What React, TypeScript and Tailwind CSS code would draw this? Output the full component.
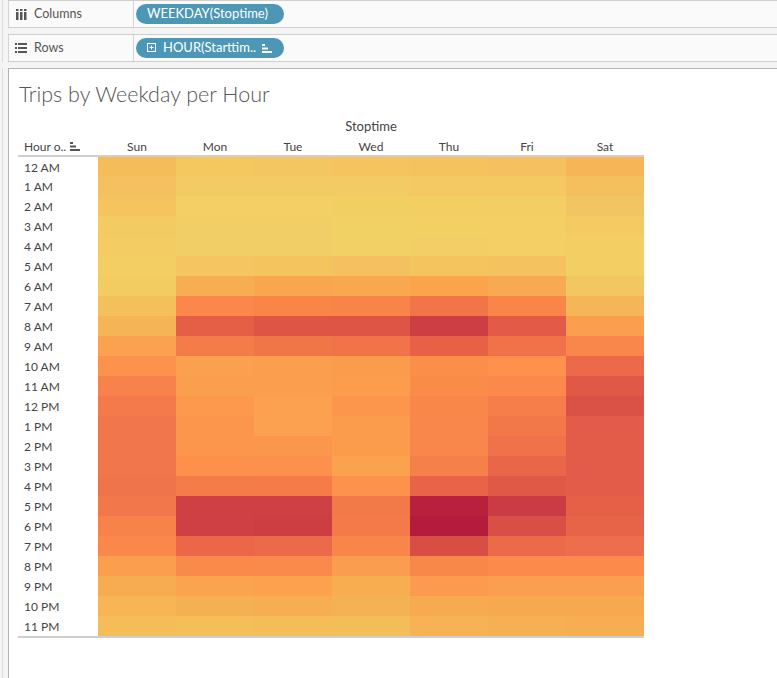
const hours = [
  "12 AM", "1 AM", "2 AM", "3 AM", "4 AM", "5 AM", "6 AM", "7 AM", "8 AM", "9 AM", "10 AM", "11 AM",
  "12 PM", "1 PM", "2 PM", "3 PM", "4 PM", "5 PM", "6 PM", "7 PM", "8 PM", "9 PM", "10 PM", "11 PM",
];

const days = ["Sun", "Mon", "Tue", "Wed", "Thu", "Fri", "Sat"];

// one row per hour, Sun to Sat
const heat = [
  ["#f5bd59", "#f5c85f", "#f4c661", "#f6c45f", "#f5c35d", "#f4c060", "#f6b658"],
  ["#f4c060", "#f3cb64", "#f3cb64", "#f3cb64", "#f4c964", "#f5c962", "#f4c05e"],
  ["#f5c45e", "#f3cf65", "#f3cf65", "#f2cf62", "#f3cf63", "#f3ce64", "#f2c563"],
  ["#f3cb63", "#f2cf66", "#f2cf66", "#f1d064", "#f3d064", "#f4d064", "#f4ca63"],
  ["#f3cd64", "#f2cf66", "#f2cf66", "#f3d066", "#f3ce66", "#f3cf66", "#f3ce62"],
  ["#f3ce62", "#f4c560", "#f6c45c", "#f5c160", "#f4c45e", "#f5c260", "#f3ce62"],
  ["#f2cc60", "#f7ae52", "#f9a74e", "#f8a950", "#fba44c", "#f8aa52", "#f2c660"],
  ["#f4c05c", "#fb884a", "#f98647", "#f98448", "#f17548", "#f98648", "#f5b659"],
  ["#f5b556", "#e55f46", "#de5445", "#de5445", "#cc3e44", "#e35a47", "#fb9e4e"],
  ["#faa24f", "#f47c49", "#f07648", "#f07349", "#e86046", "#ef7249", "#f9864a"],
  ["#fd924c", "#fba04e", "#fb9e4e", "#fa9c4c", "#fb8f4a", "#fe914c", "#ec6a49"],
  ["#f7824b", "#fa9f4e", "#fb9f4f", "#fb9d4d", "#fa8c4a", "#fb894b", "#df5946"],
  ["#f47a4b", "#fc994d", "#fba150", "#fb964c", "#fa874a", "#f57e4a", "#da5246"],
  ["#f1764b", "#fc964c", "#fba150", "#fb9c4d", "#f9864a", "#f2784a", "#e25c49"],
  ["#f1764b", "#fc964c", "#fb974c", "#fa9c4c", "#f9864a", "#ef724a", "#e25c49"],
  ["#f1764b", "#fd914c", "#fd904c", "#fba24f", "#f5804a", "#ea6648", "#e25c49"],
  ["#ef744b", "#f47c49", "#f57c49", "#fd924c", "#e96349", "#e05946", "#e25c49"],
  ["#f2774a", "#cf4044", "#cf4044", "#f27949", "#b9203e", "#cb3b43", "#e66048"],
  ["#f7834a", "#cf4044", "#cd3e43", "#f47a49", "#b51b3d", "#d94f46", "#e86449"],
  ["#fa884b", "#ec6749", "#eb6a4a", "#f8854a", "#d84e45", "#eb6a49", "#ec6e4c"],
  ["#fb9e4e", "#fa8a4a", "#f98a4c", "#fb9d4e", "#f8874a", "#fb8a4b", "#fb8a4b"],
  ["#f6ad52", "#fba44f", "#fca24f", "#f6ae51", "#fc9a4f", "#fa9f4f", "#fa9e4f"],
  ["#f7b555", "#f6b054", "#f7ad52", "#f5b254", "#f8aa50", "#f7a94f", "#f8a950"],
  ["#f5bd58", "#f5bf58", "#f5bd58", "#f3bd58", "#f6b254", "#f6af52", "#f7ae52"],
];

const font = "font-['Lato','Open_Sans',sans-serif]";

function SortIcon({ className }: { className: string }) {
  return (
    <svg width="10" height="9" viewBox="0 0 10 9" className={className} fill="currentColor">
      <rect x="0" y="0" width="3" height="2" />
      <rect x="0" y="3.5" width="6" height="2" />
      <rect x="0" y="7" width="10" height="2" />
    </svg>
  );
}

function Shelf({ label, icon, children }: { label: string; icon: React.ReactNode; children: React.ReactNode }) {
  return (
    <div className="flex h-[28px] border-y border-[#cfcfcf] bg-[#fafafa]">
      <div className="flex w-[126px] items-center border-x border-[#d4d4d4] pl-[6px] text-[12.5px] text-[#555555]">
        <span className="flex w-[19px] text-[#555555]">{icon}</span>
        {label}
      </div>
      <div className="flex items-center pl-[2px]">{children}</div>
    </div>
  );
}

export default function App() {
  return (
    <div className={`${font} flex h-[678px] w-[777px] overflow-hidden bg-[#f4f4f4]`}>
      <div className="flex w-[8px] shrink-0 flex-col gap-[6px]">
        <div className="h-[62px] w-[3px] border-r border-[#dcdcdc]" />
        <div className="w-[3px] flex-1 border-r border-[#dcdcdc]" />
      </div>
      <div className="flex min-w-0 flex-1 flex-col">
        <div className="flex flex-col gap-[6px]">
          <Shelf
            label="Columns"
            icon={
              <svg width="11" height="11" viewBox="0 0 11 11" fill="currentColor" className="ml-[1px]">
                <rect x="0" y="3" width="2.5" height="8" />
                <rect x="4" y="3" width="2.5" height="8" />
                <rect x="8" y="3" width="2.5" height="8" />
                <rect x="0" y="0" width="2.5" height="2" />
                <rect x="4" y="0" width="2.5" height="2" />
                <rect x="8" y="0" width="2.5" height="2" />
              </svg>
            }
          >
            <div className="flex h-[20px] w-[148px] items-center rounded-full bg-[#4b97b5] pl-[11px] text-[13px] text-white">
              WEEKDAY(Stoptime)
            </div>
          </Shelf>
          <Shelf
            label="Rows"
            icon={
              <svg width="12" height="10" viewBox="0 0 12 10" fill="currentColor">
                <rect x="0" y="0" width="2" height="2" />
                <rect x="3" y="0" width="9" height="2" />
                <rect x="0" y="4" width="2" height="2" />
                <rect x="3" y="4" width="9" height="2" />
                <rect x="0" y="8" width="2" height="2" />
                <rect x="3" y="8" width="9" height="2" />
              </svg>
            }
          >
            <div className="flex h-[20px] w-[148px] items-center rounded-full bg-[#4b97b5] pl-[11px] text-[13px] text-white">
              <svg width="10" height="10" viewBox="0 0 10 10" fill="none" stroke="currentColor" className="mr-[6px]">
                <rect x="0.5" y="0.5" width="8" height="8" />
                <path d="M2.5 4.5h4M4.5 2.5v4" />
              </svg>
              HOUR(Starttim..
              <SortIcon className="ml-[6px] text-white" />
            </div>
          </Shelf>
        </div>
        <div className="mt-[6px] flex-1 border-l border-t border-[#b4b4b4] bg-white pl-[9px]">
          <h1 className="mt-[12px] h-[27px] pl-[1px] text-[21.5px] leading-[27px] font-light text-[#555555]">
            Trips by Weekday per Hour
          </h1>
          <div className="mt-[10px] w-[626px]">
            <div className="flex h-[18px] items-center pl-[80px]">
              <div className="w-full text-center text-[13px] text-[#444444]">Stoptime</div>
            </div>
            <div className="flex h-[21px] border-b-2 border-[#cfcfcf] pt-[2px] text-[12px] text-[#444444]">
              <div className="flex w-[80px] items-center pl-[6px]">
                Hour o..
                <SortIcon className="ml-[4px] text-[#555555]" />
              </div>
              {days.map((d) => (
                <div key={d} className="flex w-[78px] items-center justify-center">
                  {d}
                </div>
              ))}
            </div>
            <div className="border-b-2 border-[#cfcfcf]">
              {hours.map((h, i) => (
                <div key={h} className={`flex ${i === 0 ? "h-[19px]" : "h-[20px]"}`}>
                  <div className="flex w-[80px] items-center pl-[6px] pt-[2px] text-[12px] text-[#444444]">{h}</div>
                  {heat[i].map((c, j) => (
                    <div key={j} className="w-[78px]" style={{ backgroundColor: c }} />
                  ))}
                </div>
              ))}
            </div>
          </div>
        </div>
      </div>
    </div>
  );
}
